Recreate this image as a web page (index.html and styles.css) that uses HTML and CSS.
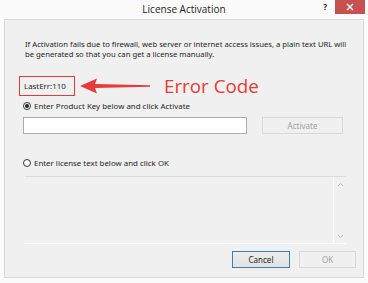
FILE: index.html
```html
<!DOCTYPE html>
<html>
<head>
<meta charset="utf-8">
<link rel="stylesheet" href="styles.css">
</head>
<body>
<div class="window">
  <div class="titlebar">
    <div></div>
    <div class="title">License Activation</div>
    <div class="controls">
      <span class="help">?</span>
      <span class="close"><svg width="8" height="8" viewBox="0 0 8 8"><path d="M1 1L7 7M7 1L1 7" stroke="#fff" stroke-width="1.4"/></svg></span>
    </div>
  </div>
  <div class="panel">
    <p class="info">If Activation fails due to firewall, web server or internet access issues, a plain text URL will<br>be generated so that you can get a license manually.</p>
    <div class="error-row">
      <div class="err-box">LastErr:110</div>
      <svg class="arrow" width="72" height="18" viewBox="0 0 72 18"><polygon points="0,9 17,1.5 15,7 70,8.3 70,9.7 15,11 17,16.5" fill="#e8393b"/></svg>
      <div class="err-label">Error Code</div>
    </div>
    <label class="radio-row first"><span class="radio checked"></span>Enter Product Key below and click Activate</label>
    <div class="key-row">
      <div class="textbox"></div>
      <div class="btn disabled activate">Activate</div>
    </div>
    <label class="radio-row second"><span class="radio"></span>Enter license text below and click OK</label>
    <div class="textarea">
      <div class="ta-body"></div>
      <div class="scroll">
        <svg width="7" height="5" viewBox="0 0 7 5"><path d="M1 4L3.5 1.5L6 4" fill="none" stroke="#b9b9b9" stroke-width="1"/></svg>
        <svg width="7" height="5" viewBox="0 0 7 5"><path d="M1 1L3.5 3.5L6 1" fill="none" stroke="#b9b9b9" stroke-width="1"/></svg>
      </div>
    </div>
    <div class="buttons">
      <div class="btn cancel">Cancel</div>
      <div class="btn disabled ok">OK</div>
    </div>
  </div>
</div>
</body>
</html>
```

FILE: styles.css
```css
* { box-sizing: border-box; }
html, body { margin: 0; padding: 0; }
body {
  width: 368px;
  height: 283px;
  background: #fbfbfb;
  font-family: "Noto Sans", "Open Sans", sans-serif;
  color: #1e1e1e;
  overflow: hidden;
}
.window { width: 368px; height: 283px; }
.titlebar {
  height: 19px;
  display: grid;
  grid-template-columns: 1fr auto 1fr;
  align-items: start;
}
.title {
  font-size: 10px;
  line-height: 19px;
  color: #222;
  font-family: "Open Sans", "Noto Sans", sans-serif;
}
.controls {
  justify-self: end;
  display: flex;
  align-items: flex-start;
  margin-right: 3px;
}
.help {
  font-size: 8px;
  font-weight: bold;
  line-height: 14px;
  margin-right: 8px;
  color: #222;
}
.close {
  width: 30px;
  height: 14px;
  background: #c75050;
  display: flex;
  align-items: center;
  justify-content: center;
}
.panel {
  margin: 0 4px;
  height: 259px;
  border: 1px solid #d9d9d9;
  background: #f0f0f0;
  padding: 20px 7px 0 18px;
  font-size: 7.9px;
}
.info {
  margin: 0 0 0 2px;
  font-size: 7.7px;
  line-height: 9.5px;
  white-space: nowrap;
}
.error-row {
  display: flex;
  align-items: center;
  margin: 17px 0 0 -4px;
}
.err-box {
  width: 56px;
  height: 20px;
  border: 1px solid #e03a3a;
  padding-left: 4px;
  line-height: 18px;
  font-size: 7.9px;
}
.arrow { margin-left: 5px; }
.err-label {
  margin-left: 12px;
  font-family: "Open Sans", sans-serif;
  font-size: 18.8px;
  line-height: 20px;
  color: #e8393b;
}
.radio-row {
  display: flex;
  align-items: center;
  height: 10px;
}
.radio-row.first { margin-top: 5px; }
.radio-row.second { margin-top: 24px; }
.radio {
  width: 8px;
  height: 8px;
  border: 1px solid #333;
  border-radius: 50%;
  background: #fff;
  margin-right: 3px;
  display: flex;
  align-items: center;
  justify-content: center;
}
.radio.checked::after {
  content: "";
  width: 4px;
  height: 4px;
  border-radius: 50%;
  background: #222;
}
.key-row {
  display: flex;
  align-items: center;
  margin-top: 6px;
}
.textbox {
  width: 224px;
  height: 17px;
  background: #fff;
  border: 1px solid #ababab;
}
.btn {
  height: 17px;
  border: 1px solid #acacac;
  background: #e5e5e5;
  display: flex;
  align-items: center;
  justify-content: center;
  font-size: 8px;
}
.btn.disabled {
  border-color: #d9d9d9;
  background: #f0f0f0;
  color: #a0a0a0;
}
.activate { width: 81px; margin-left: 15px; }
.textarea {
  margin: 8px 0 0 2px;
  width: 321px;
  height: 68px;
  border-top: 1px solid #dcdcdc;
  border-bottom: 1px solid #ffffff;
  display: flex;
}
.ta-body { flex: 1; }
.scroll {
  width: 13px;
  border-left: 1px solid #ffffff;
  display: flex;
  flex-direction: column;
  justify-content: space-between;
  align-items: center;
  padding: 5px 0 4px;
}
.buttons {
  display: flex;
  justify-content: flex-end;
  gap: 9px;
  margin-top: 7px;
}
.cancel {
  width: 58px;
  border-color: #3c7fb1;
  background: linear-gradient(#ececec, #e3e3e3);
  color: #1e1e1e;
}
.ok { width: 57px; }
```
